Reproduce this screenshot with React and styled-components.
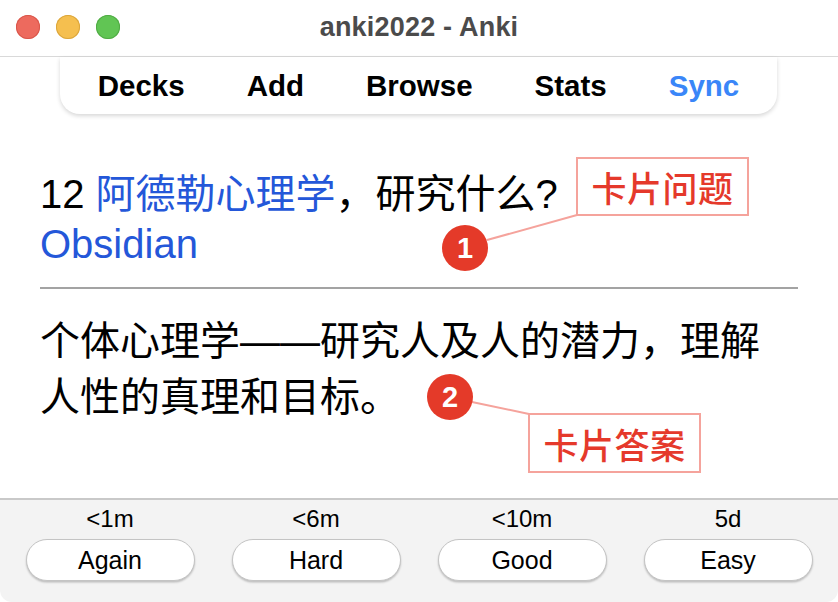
import React from "react";
import styled, { createGlobalStyle } from "styled-components";

const Global = createGlobalStyle`
  html, body { margin: 0; padding: 0; background: #ffffff; }
  body { font-family: "Liberation Sans", "Noto Sans CJK SC", Arial, sans-serif; }
  * { box-sizing: border-box; }
`;

const Window = styled.div`
  position: relative;
  width: 838px;
  height: 602px;
  display: flex;
  flex-direction: column;
  background: #ffffff;
  border-radius: 12px;
  overflow: hidden;
`;

const TitleBar = styled.div`
  height: 57px;
  flex: none;
  display: grid;
  grid-template-columns: 1fr auto 1fr;
  align-items: center;
  border-bottom: 1px solid #d9d9d9;
  padding-bottom: 2px;
`;

const Lights = styled.div`
  display: flex;
  gap: 16px;
  padding-left: 16px;
`;

const Light = styled.span`
  width: 24px;
  height: 24px;
  border-radius: 50%;
  background: ${(p) => p.$c};
  box-shadow: inset 0 0 0 1px ${(p) => p.$b};
`;

const Title = styled.div`
  font-family: "Liberation Sans", Arial, sans-serif;
  font-weight: 700;
  font-size: 27px;
  color: #4b4b4b;
  letter-spacing: 0.2px;
`;

const Toolbar = styled.nav`
  flex: none;
  height: 57px;
  margin: 0 61px 0 60px;
  display: flex;
  align-items: center;
  justify-content: center;
  gap: 62px;
  background: #ffffff;
  border-radius: 0 0 20px 20px;
  box-shadow: 0 2px 4px rgba(0, 0, 0, 0.16);
`;

const NavItem = styled.span`
  font-family: "Liberation Sans", Arial, sans-serif;
  font-weight: 700;
  font-size: 29.5px;
  color: ${(p) => (p.$active ? "#3a86f8" : "#000000")};
`;

const Card = styled.main`
  flex: 1;
  padding: 55px 40px 0 40px;
  font-family: "Liberation Sans", "Noto Sans CJK SC", sans-serif;
  color: #000;
`;

const Question = styled.div`
  font-size: 40px;
  line-height: 50px;
`;

const Link = styled.span`
  color: #2457d9;
`;

const LinkLine = styled.div`
  color: #2457d9;
`;

const Divider = styled.hr`
  margin: 18px 0 0 0;
  border: none;
  height: 2px;
  background: #a3a3a3;
`;

const AnswerText = styled.div`
  margin-top: 24px;
  font-size: 40px;
  line-height: 56px;
`;

const Footer = styled.footer`
  flex: none;
  height: 104px;
  border-top: 2px solid #c9c9c9;
  background: #f3f3f3;
  display: flex;
  justify-content: center;
  gap: 37px;
  padding-top: 6px;
`;

const EaseCol = styled.div`
  display: flex;
  flex-direction: column;
  align-items: center;
  gap: 7px;
`;

const Due = styled.div`
  font-family: "Liberation Sans", Arial, sans-serif;
  font-size: 24px;
  line-height: 26px;
  color: #000;
`;

const EaseButton = styled.button`
  width: 169px;
  height: 42px;
  border-radius: 21px;
  border: 1px solid #c4c4c4;
  background: #ffffff;
  box-shadow: 0 1.5px 2px rgba(0, 0, 0, 0.22);
  font-family: "Liberation Sans", Arial, sans-serif;
  font-size: 25px;
  color: #000;
  padding: 0;
`;

const Callouts = styled.svg`
  position: absolute;
  left: 0;
  top: 0;
  pointer-events: none;
`;

const Label = styled.div`
  position: absolute;
  left: ${(p) => p.$x}px;
  top: ${(p) => p.$y}px;
  width: 173px;
  height: ${(p) => p.$h}px;
  border: 2px solid #f5a39c;
  background: #ffffff;
  display: flex;
  align-items: center;
  justify-content: center;
  font-family: "Noto Sans CJK SC", sans-serif;
  font-size: 35px;
  font-weight: 500;
  color: #e5392b;
  letter-spacing: 0.5px;
`;

const Badge = styled.div`
  position: absolute;
  left: ${(p) => p.$x}px;
  top: ${(p) => p.$y}px;
  width: 46px;
  height: 46px;
  border-radius: 50%;
  background: #e43a29;
  color: #ffffff;
  display: flex;
  align-items: center;
  justify-content: center;
  font-family: "Liberation Sans", Arial, sans-serif;
  font-weight: 700;
  font-size: 29px;
`;

const navItems = ["Decks", "Add", "Browse", "Stats", "Sync"];
const eases = [
  ["<1m", "Again"],
  ["<6m", "Hard"],
  ["<10m", "Good"],
  ["5d", "Easy"],
];

export default function App() {
  return (
    <>
      <Global />
      <Window>
        <TitleBar>
          <Lights>
            <Light $c="#ed6a5e" $b="#d9574b" />
            <Light $c="#f5bf4f" $b="#dba63c" />
            <Light $c="#61c554" $b="#51ab45" />
          </Lights>
          <Title>anki2022 - Anki</Title>
          <div />
        </TitleBar>
        <Toolbar>
          {navItems.map((n) => (
            <NavItem key={n} $active={n === "Sync"}>
              {n}
            </NavItem>
          ))}
        </Toolbar>
        <Card>
          <Question>
            12 <Link>阿德勒心理学</Link>，研究什么?
            <LinkLine>Obsidian</LinkLine>
          </Question>
          <Divider />
          <AnswerText>个体心理学——研究人及人的潜力，理解人性的真理和目标。</AnswerText>
        </Card>
        <Footer>
          {eases.map(([due, label]) => (
            <EaseCol key={label}>
              <Due>{due}</Due>
              <EaseButton>{label}</EaseButton>
            </EaseCol>
          ))}
        </Footer>
        <Callouts width="838" height="602">
          <line x1="487" y1="240" x2="577" y2="215" stroke="#f5a39c" strokeWidth="2" />
          <line x1="472" y1="402" x2="529" y2="414" stroke="#f5a39c" strokeWidth="2" />
        </Callouts>
        <Label $x={576} $y={157} $h={59}>卡片问题</Label>
        <Label $x={528} $y={413} $h={60}>卡片答案</Label>
        <Badge $x={442} $y={225}>1</Badge>
        <Badge $x={427} $y={374}>2</Badge>
      </Window>
    </>
  );
}
